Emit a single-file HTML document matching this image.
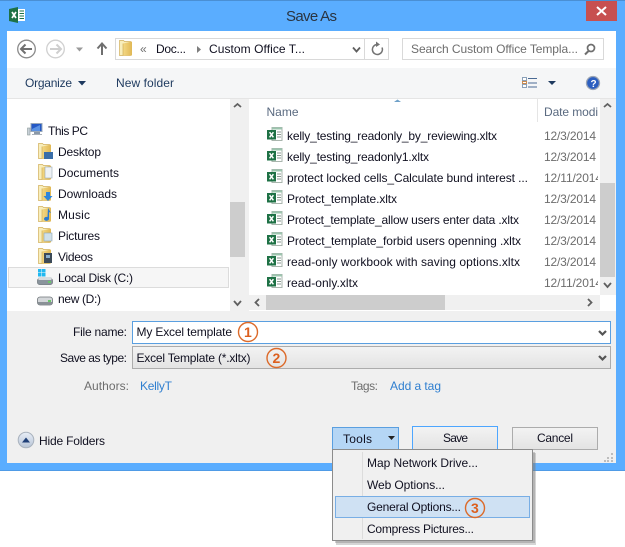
<!DOCTYPE html>
<html><head><meta charset="utf-8"><style>
html,body{margin:0;padding:0;background:#fff;width:625px;height:547px;overflow:hidden}
svg{display:block}
text{font-family:"Liberation Sans",sans-serif;font-size:12px;fill:#101020}
.g{fill:#6d6d6d}.h{fill:#5a6a80}.n{fill:#1e3a5f}.b{fill:#2f7fd0}
.c{fill:none;stroke:#dc6a2a;stroke-width:1.4}.cn{fill:#dc5f1e;font-weight:bold;font-size:14px}
</style></head><body>
<svg width="625" height="547" viewBox="0 0 625 547" xmlns="http://www.w3.org/2000/svg">
<defs>
<linearGradient id="fo" x1="0" y1="0" x2="1" y2="0"><stop offset="0" stop-color="#f4d884"/><stop offset="1" stop-color="#e0b855"/></linearGradient>
<linearGradient id="btn" x1="0" y1="0" x2="0" y2="1"><stop offset="0" stop-color="#f3f3f3"/><stop offset="1" stop-color="#e3e3e3"/></linearGradient>
<linearGradient id="hid" x1="0" y1="0" x2="0" y2="1"><stop offset="0" stop-color="#e8eef7"/><stop offset="1" stop-color="#b7c4d6"/></linearGradient>
<g id="folder"><path d="M0.500 0.500H4.500L5.500 1.500H11.500V15.500H0.500Z" fill="#f8eebc" stroke="#d2b05c" stroke-width="0.700"/><path d="M4 3.500L13 1.500V15.500H4Z" fill="url(#fo)"/><path d="M4 3.500V15.500" stroke="#c9a54c" stroke-width="0.600"/></g>
<g id="xl"><rect x="5" y="0.500" width="10" height="13" fill="#fff" stroke="#a9b5ad"/><path d="M5 0.500H15V2.500H5Z" fill="#9cc5ae"/><path d="M10 5H14M10 7.500H14M10 10H14" stroke="#8a9a90" stroke-width="1"/><rect x="0" y="3" width="9" height="9.500" fill="#1e7145"/><path d="M2.600 5.200L6.400 10.300M6.400 5.200L2.600 10.300" stroke="#fff" stroke-width="1.500"/></g>
</defs>

<!-- frame -->
<rect x="0" y="0" width="625" height="471" fill="#5aadff"/>
<rect x="0" y="0" width="625" height="1" fill="#4a8fd4"/>
<rect x="0" y="470" width="625" height="1" fill="#4f9be6"/>
<rect x="586" y="1" width="31" height="20" fill="#c75050"/>
<path d="M597 7L606 15M606 7L597 15" stroke="#fff" stroke-width="2"/>
<g transform="translate(9,7)"><path d="M0 2L9 0V16L0 14Z" fill="#1e7145"/><rect x="9" y="2" width="7" height="12" fill="#fff"/><path d="M10.500 4H15M10.500 6.500H15M10.500 9H15M10.500 11.500H15" stroke="#1e7145" stroke-width="1"/><path d="M3 5L7 11M7 5L3 11" stroke="#fff" stroke-width="1.700"/></g>
<text x="286" y="21" textLength="51" style="font-size:15px;fill:#2a3440">Save As</text>

<rect x="7" y="31" width="609" height="432" fill="#f0f0f0"/>
<rect x="7" y="31" width="609" height="37" fill="#fff"/>
<rect x="7" y="68" width="609" height="30" fill="#f5f6f7"/>
<rect x="7" y="98" width="609" height="1" fill="#e5e5e5"/>

<!-- nav -->
<circle cx="26.500" cy="49" r="8.800" fill="#fff" stroke="#8a8a8a" stroke-width="1.300"/>
<path d="M21 49H32M25.500 44.500L21 49L25.500 53.500" fill="none" stroke="#707070" stroke-width="2"/>
<circle cx="55.500" cy="49" r="8.800" fill="#fff" stroke="#d0d0d0" stroke-width="1.300"/>
<path d="M50 49H61M56.500 44.500L61 49L56.500 53.500" fill="none" stroke="#cfcfcf" stroke-width="2"/>
<path d="M76 47.500H83L79.500 51.500Z" fill="#9a9a9a"/>
<path d="M102 55V44M97.500 48.500L102 43.500L106.500 48.500" fill="none" stroke="#6f6f6f" stroke-width="2"/>

<rect x="115.500" y="38.500" width="273" height="21" fill="#fff" stroke="#d9d9d9"/>
<use href="#folder" transform="translate(119,40)"/>
<text x="140" y="53" textLength="8" class="g">«</text>
<text x="156" y="53" textLength="30">Doc...</text>
<path d="M197 46L201 49.500L197 53Z" fill="#7d7d7d"/>
<text x="209" y="53" textLength="96">Custom Office T...</text>
<path d="M353 47.500L356.500 51.500L360 47.500" fill="none" stroke="#5f5f5f" stroke-width="1.800"/>
<rect x="364" y="38" width="1" height="22" fill="#d9d9d9"/>
<path d="M382 47.500A5 5 0 1 1 377 44.500" fill="none" stroke="#737373" stroke-width="1.500"/><path d="M376 41.500L380 44.500L376 47Z" fill="#737373"/>

<rect x="402.500" y="38.500" width="201" height="21" fill="#fff" stroke="#d9d9d9"/>
<text x="411" y="53" textLength="167" class="g">Search Custom Office Templa...</text>
<circle cx="591" cy="48" r="3.500" fill="none" stroke="#6f6f6f" stroke-width="1.700"/><path d="M588.500 51L585 54.500" stroke="#6f6f6f" stroke-width="2"/>

<!-- toolbar -->
<text x="25" y="87" textLength="47" class="n">Organize</text>
<path d="M78 81H86L82 85.500Z" fill="#1e3a5f"/>
<text x="116" y="87" textLength="58" class="n">New folder</text>
<rect x="522.500" y="77.500" width="4" height="3" fill="#fff" stroke="#8aa0b8"/><rect x="522.500" y="81.500" width="4" height="2" fill="#fff" stroke="#c98a50"/><rect x="522.500" y="84.500" width="4" height="3" fill="#fff" stroke="#8aa0b8"/>
<path d="M528 78.500H537M528 83H537M528 87H537" stroke="#4a6a94" stroke-width="1"/>
<path d="M548 81H556L552 85Z" fill="#1e3a5f"/>
<circle cx="593" cy="83" r="6.500" fill="#2c5fc0" stroke="#9aa4b4" stroke-width="1.300"/>
<text x="590.500" y="87" textLength="5" style="font-size:10px;font-weight:bold;fill:#fff">?</text>

<!-- left pane -->
<rect x="7" y="99" width="223" height="212" fill="#fff"/>
<rect x="230" y="99" width="16" height="212" fill="#f0f0f0"/>
<rect x="230" y="202" width="15" height="55" fill="#cdcdcd"/>
<path d="M234 107L237.500 104L241 107" fill="none" stroke="#606060" stroke-width="1.800"/>
<path d="M234 301L237.500 305L241 301" fill="none" stroke="#606060" stroke-width="1.800"/>
<rect x="246" y="99" width="3" height="212" fill="#f0f0f0"/>

<g transform="translate(27,123)"><rect x="4" y="0.500" width="11" height="8" fill="#2458c4" stroke="#9aa8b8"/><path d="M5 6L13 2V8H5Z" fill="#5a92e4"/><rect x="7" y="9" width="6" height="2" fill="#8a98a8"/><rect x="0.500" y="5" width="2.500" height="7" fill="#c8d0d8" stroke="#8a9a9a" stroke-width="0.600"/><rect x="5" y="11" width="10" height="1" fill="#a8b0b8"/></g>
<text x="48" y="135" textLength="40">This PC</text>

<use href="#folder" transform="translate(38,143)"/><rect x="44" y="152" width="9" height="7" fill="#3a6ea8"/>
<text x="58" y="156" textLength="43">Desktop</text>
<use href="#folder" transform="translate(38,164)"/><rect x="45" y="167" width="7" height="11" fill="#eef2f6" stroke="#9aa8b4" stroke-width="0.600"/>
<text x="58" y="177" textLength="61">Documents</text>
<use href="#folder" transform="translate(38,185)"/><path d="M46 192H50V196H52.500L48 201L43.500 196H46Z" fill="#2e86dc"/>
<text x="58" y="198" textLength="59">Downloads</text>
<use href="#folder" transform="translate(38,206)"/><path d="M48 208L51 213L49 212V219A2.500 2 0 1 1 47.500 217Z" fill="#2a7ad0"/>
<text x="58" y="219" textLength="32">Music</text>
<use href="#folder" transform="translate(38,227)"/><rect x="44" y="233" width="8" height="8" fill="#cfe0ea" stroke="#8ea4b0" stroke-width="0.600"/>
<text x="58" y="240" textLength="42">Pictures</text>
<use href="#folder" transform="translate(38,248)"/><rect x="44" y="253" width="8" height="10" fill="#3c4a58"/><rect x="46" y="255" width="4" height="3" fill="#8ab0d0"/>
<text x="58" y="261" textLength="35">Videos</text>

<rect x="8.500" y="267.500" width="220" height="20" fill="#f6f6f6" stroke="#dcdcdc"/>
<g transform="translate(37,269)"><rect x="1" y="0" width="3.500" height="3.500" fill="#22b8f0"/><rect x="5" y="0" width="3.500" height="3.500" fill="#22b8f0"/><rect x="1" y="4" width="3.500" height="3.500" fill="#22b8f0"/><rect x="5" y="4" width="3.500" height="3.500" fill="#22b8f0"/><rect x="0.500" y="9.500" width="15" height="6" rx="2" fill="#8a949c" stroke="#6a7278" stroke-width="0.700"/><rect x="1.500" y="8" width="13" height="3" fill="#d8dcdf"/><rect x="11" y="12" width="3" height="2" fill="#6ac86a"/></g>
<text x="58" y="282" textLength="75">Local Disk (C:)</text>
<g transform="translate(37,295)"><rect x="0.500" y="2" width="15" height="8" rx="2.500" fill="#d4d7da" stroke="#6d7478" stroke-width="0.800"/><rect x="1" y="7" width="14" height="3" fill="#8a9196"/><rect x="11" y="5" width="3" height="2" fill="#6ac86a"/></g>
<text x="58" y="303" textLength="43">new (D:)</text>

<!-- file list -->
<rect x="249" y="99" width="351" height="212" fill="#fff"/>
<path d="M394 102L397.500 99.500L401 102Z" fill="#6ea0c8"/>
<rect x="537" y="99" width="1" height="23" fill="#e5e5e5"/>
<text x="266.500" y="116" textLength="32" class="h">Name</text>
<text x="544" y="116" textLength="54" class="h">Date modi</text>

<use href="#xl" transform="translate(267,127)"/><text x="287" y="140" textLength="210">kelly_testing_readonly_by_reviewing.xltx</text><text x="544" y="140" textLength="52" class="g">12/3/2014</text>
<use href="#xl" transform="translate(267,148)"/><text x="287" y="161" textLength="142">kelly_testing_readonly1.xltx</text><text x="544" y="161" textLength="52" class="g">12/3/2014</text>
<use href="#xl" transform="translate(267,169)"/><text x="287" y="182" textLength="241">protect locked cells_Calculate bund interest ...</text><text x="544" y="182" textLength="58" class="g">12/11/2014</text>
<use href="#xl" transform="translate(267,190)"/><text x="287" y="203" textLength="110">Protect_template.xltx</text><text x="544" y="203" textLength="52" class="g">12/3/2014</text>
<use href="#xl" transform="translate(267,211)"/><text x="287" y="224" textLength="232">Protect_template_allow users enter data .xltx</text><text x="544" y="224" textLength="52" class="g">12/3/2014</text>
<use href="#xl" transform="translate(267,232)"/><text x="287" y="245" textLength="234">Protect_template_forbid users openning .xltx</text><text x="544" y="245" textLength="52" class="g">12/3/2014</text>
<use href="#xl" transform="translate(267,253)"/><text x="287" y="266" textLength="233">read-only workbook with saving options.xltx</text><text x="544" y="266" textLength="52" class="g">12/3/2014</text>
<use href="#xl" transform="translate(267,274)"/><text x="287" y="287" textLength="71">read-only.xltx</text><text x="544" y="287" textLength="58" class="g">12/11/2014</text>
<rect x="598" y="125" width="2" height="170" fill="#fff"/>

<rect x="600" y="99" width="16" height="196" fill="#f0f0f0"/>
<rect x="600" y="183" width="15" height="94" fill="#cdcdcd"/>
<path d="M604 107L607.500 104L611 107" fill="none" stroke="#606060" stroke-width="1.800"/>
<path d="M604 283L607.500 287L611 283" fill="none" stroke="#606060" stroke-width="1.800"/>
<rect x="249" y="295" width="351" height="15" fill="#f0f0f0"/>
<rect x="266" y="295" width="179" height="15" fill="#cdcdcd"/>
<path d="M259 299L255.500 302.500L259 306" fill="none" stroke="#606060" stroke-width="1.800"/>
<path d="M588 299L591.500 302.500L588 306" fill="none" stroke="#606060" stroke-width="1.800"/>
<rect x="600" y="295" width="16" height="16" fill="#fff"/>

<!-- form -->
<rect x="7" y="311" width="609" height="152" fill="#f0f0f0"/>
<text x="73" y="336" textLength="54">File name:</text>
<rect x="132.500" y="321.500" width="478" height="22" fill="#fff" stroke="#5a9fe0"/>
<text x="136.500" y="336" textLength="95.500">My Excel template</text>
<path d="M599 331L602.500 334.500L606 331" fill="none" stroke="#555" stroke-width="2.200"/>
<circle class="c" cx="248" cy="332" r="9.500"/><text class="cn" x="244" y="337" textLength="8">1</text>

<text x="60" y="362" textLength="67">Save as type:</text>
<rect x="132.500" y="346.500" width="478" height="22" fill="url(#btn)" stroke="#acacac"/>
<text x="136.500" y="362" textLength="114">Excel Template (*.xltx)</text>
<path d="M599 356L602.500 359.500L606 356" fill="none" stroke="#555" stroke-width="2.200"/>
<circle class="c" cx="276.500" cy="358" r="9.500"/><text class="cn" x="272.500" y="363" textLength="8">2</text>

<text x="84" y="390" textLength="45" class="g">Authors:</text>
<text x="140" y="390" textLength="32" class="b">KellyT</text>
<text x="351" y="390" textLength="27" class="g">Tags:</text>
<text x="390" y="390" textLength="51" class="b">Add a tag</text>

<circle cx="26" cy="440" r="7.800" fill="url(#hid)" stroke="#a9b2bd"/>
<path d="M22 442.500H30L26 437.500Z" fill="#1f3f77"/>
<text x="39" y="445" textLength="66">Hide Folders</text>

<rect x="332.500" y="427.500" width="66" height="22" fill="#b5d6f5" stroke="#5a9fe0"/>
<text x="343" y="443" textLength="29">Tools</text>
<path d="M388 436H395L391.500 440Z" fill="#222"/>
<rect x="412.500" y="426.500" width="85" height="23" fill="url(#btn)" stroke="#4da6ff"/>
<text x="443" y="442" textLength="25">Save</text>
<rect x="512.500" y="427.500" width="85" height="22" fill="url(#btn)" stroke="#acacac"/>
<text x="537" y="442" textLength="36">Cancel</text>
<g fill="#bdbdbd"><rect x="611" y="453" width="2" height="2"/><rect x="611" y="457" width="2" height="2"/><rect x="607" y="457" width="2" height="2"/><rect x="611" y="460" width="2" height="2"/><rect x="607" y="460" width="2" height="2"/><rect x="604" y="460" width="2" height="2"/></g>

<!-- menu -->
<rect x="336" y="453" width="200" height="92" fill="#888" opacity=".35"/>
<rect x="335" y="452" width="200" height="91" fill="#777" opacity=".35"/>
<rect x="332.500" y="449.500" width="200" height="91" fill="#f0f0f0" stroke="#8c8c8c"/>
<rect x="362" y="452" width="1" height="87" fill="#dcdcdc"/>
<rect x="335.500" y="496.500" width="194" height="21" fill="#cfe1f3" stroke="#78aee5"/>
<text x="367" y="467" textLength="111">Map Network Drive...</text>
<text x="367" y="489" textLength="78">Web Options...</text>
<text x="367" y="511" textLength="94">General Options...</text>
<text x="367" y="533" textLength="107">Compress Pictures...</text>
<circle class="c" cx="475" cy="508" r="9.500"/><text class="cn" x="471" y="513" textLength="8">3</text>
</svg>
</body></html>
